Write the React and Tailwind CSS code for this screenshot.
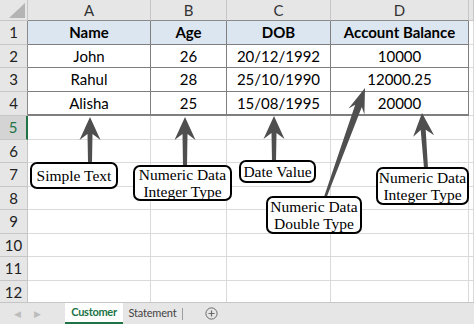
import React from 'react';

const COLS = ['A', 'B', 'C', 'D', ''];

const DATA = [
  ['Name', 'Age', 'DOB', 'Account Balance'],
  ['John', '26', '20/12/1992', '10000'],
  ['Rahul', '28', '25/10/1990', '12000.25'],
  ['Alisha', '25', '15/08/1995', '20000'],
];

// block arrow from tip to tail, as one polygon
function arrowPoints(tx, ty, bx, by, headLen = 23, headW = 21, notch = 6, shaftW = 5, tailW = 4) {
  const dx = bx - tx, dy = by - ty;
  const len = Math.hypot(dx, dy);
  const ux = dx / len, uy = dy / len;
  const nx = -uy, ny = ux;
  const p = (a, b) => `${a.toFixed(1)},${b.toFixed(1)}`;
  return [
    p(tx, ty),
    p(tx + ux * headLen + nx * headW / 2, ty + uy * headLen + ny * headW / 2),
    p(tx + ux * (headLen - notch) + nx * shaftW / 2, ty + uy * (headLen - notch) + ny * shaftW / 2),
    p(bx + nx * tailW / 2, by + ny * tailW / 2),
    p(bx - nx * tailW / 2, by - ny * tailW / 2),
    p(tx + ux * (headLen - notch) - nx * shaftW / 2, ty + uy * (headLen - notch) - ny * shaftW / 2),
    p(tx + ux * headLen - nx * headW / 2, ty + uy * headLen - ny * headW / 2),
  ].join(' ');
}

function Callout({ className, children }) {
  return (
    <div className={`absolute flex flex-col items-center justify-center bg-white border-2 border-black rounded-[7px] text-[15.5px] leading-[17px] text-black whitespace-nowrap ${className}`}
      style={{ fontFamily: '"Liberation Serif", serif' }}>
      {children}
    </div>
  );
}

function ColHeader({ label, i }) {
  const table = i < 4;
  return (
    <div className={`flex items-center justify-center bg-[#e6e6e6] text-[15px] text-[#333] border-r border-[#c6c6c6] ${table ? 'border-b border-b-[#8a8a8a]' : 'border-b border-b-[#c6c6c6]'}`}>
      {label}
    </div>
  );
}

function RowHeader({ n }) {
  if (n === 5) {
    return (
      <div className="flex items-center justify-center bg-[#d4d4d4] text-[15px] text-[#217346] border-b border-[#c6c6c6] border-r-2 border-r-[#217346]">
        {n}
      </div>
    );
  }
  return (
    <div className={`flex items-center justify-center bg-[#e6e6e6] text-[15px] text-[#222] border-b border-[#c6c6c6] border-r ${n <= 4 ? 'border-r-[#8a8a8a]' : 'border-r-[#c6c6c6]'}`}>
      {n}
    </div>
  );
}

function Cell({ r, c }) {
  if (r <= 4 && c < 4) {
    const text = DATA[r - 1][c];
    return (
      <div className={`flex items-center justify-center text-[15px] text-black border-r border-[#7f7f7f] ${r === 1 ? 'bg-[#dce6f1] font-bold' : 'bg-white'} ${r === 4 ? 'border-b-2' : 'border-b'}`}>
        {text}
      </div>
    );
  }
  return <div className="bg-white border-r border-b border-[#dadada]" />;
}

export default function App() {
  const rows = Array.from({ length: 12 }, (_, i) => i + 1);

  return (
    <div className="relative w-[474px] h-[324px] overflow-hidden bg-white flex flex-col" style={{ fontFamily: 'Lato, sans-serif' }}>
      <div className="grid h-[302px] grid-cols-[28px_123px_76px_104px_138px_1fr] grid-rows-[21px_repeat(12,1fr)]">
        <div className="relative bg-[#e6e6e6] border-r border-b border-[#c6c6c6]">
          <svg className="absolute right-[2px] bottom-[2px]" width="16" height="15" viewBox="0 0 16 15">
            <polygon points="16,0 16,15 0,15" fill="#b4b4b4" />
          </svg>
        </div>
        {COLS.map((c, i) => <ColHeader key={i} label={c} i={i} />)}
        {rows.map(r => (
          <React.Fragment key={r}>
            <RowHeader n={r} />
            {COLS.map((_, c) => <Cell key={c} r={r} c={c} />)}
          </React.Fragment>
        ))}
      </div>

      {/* sheet tabs */}
      <div className="h-[22px] flex items-stretch bg-[#e6e6e6] border-t border-[#c6c6c6] text-[11px]">
        <div className="w-[65px] flex items-center gap-[13px] pl-[14px] text-[9px] text-[#bdbdbd]">
          <span>◀</span>
          <span>▶</span>
        </div>
        <div className="w-[58px] flex items-center justify-center bg-white border-b-2 border-[#217346] font-bold text-[#217346] tracking-[-0.3px]">
          Customer
        </div>
        <div className="w-[59px] flex items-center justify-center text-[#444] tracking-[-0.2px]">
          Statement
        </div>
        <div className="flex items-center">
          <div className="w-px h-[12px] bg-[#9c9c9c]" />
        </div>
        <div className="flex items-center pl-[22px]">
          <svg width="13" height="13" viewBox="0 0 13 13">
            <circle cx="6.5" cy="6.5" r="5.6" fill="none" stroke="#6a6a6a" strokeWidth="1" />
            <path d="M6.5 3.5v6M3.5 6.5h6" stroke="#6a6a6a" strokeWidth="1.2" />
          </svg>
        </div>
      </div>

      {/* annotations */}
      <svg className="absolute left-0 top-0 pointer-events-none" width="474" height="302">
        <polygon points={arrowPoints(90, 117, 90, 162)} fill="#4f4f4f" />
        <polygon points={arrowPoints(185, 117, 185, 166)} fill="#4f4f4f" />
        <polygon points={arrowPoints(274, 116, 274, 161)} fill="#4f4f4f" />
        <polygon points={arrowPoints(365, 88, 325, 198, 25, 17, 6, 7, 2.5)} fill="#4f4f4f" />
        <polygon points={arrowPoints(422, 113, 426, 168)} fill="#4f4f4f" />
      </svg>

      <Callout className="left-[30px] top-[162px] w-[88px] h-[27px]">Simple Text</Callout>
      <Callout className="left-[133px] top-[165px] w-[99px] h-[36px]">
        <span>Numeric Data</span>
        <span>Integer Type</span>
      </Callout>
      <Callout className="left-[239px] top-[160px] w-[77px] h-[23px]">Date Value</Callout>
      <Callout className="left-[266px] top-[196px] w-[96px] h-[38px]">
        <span>Numeric Data</span>
        <span>Double Type</span>
      </Callout>
      <Callout className="left-[376px] top-[167px] w-[93px] h-[38px]">
        <span>Numeric Data</span>
        <span>Integer Type</span>
      </Callout>
    </div>
  );
}
